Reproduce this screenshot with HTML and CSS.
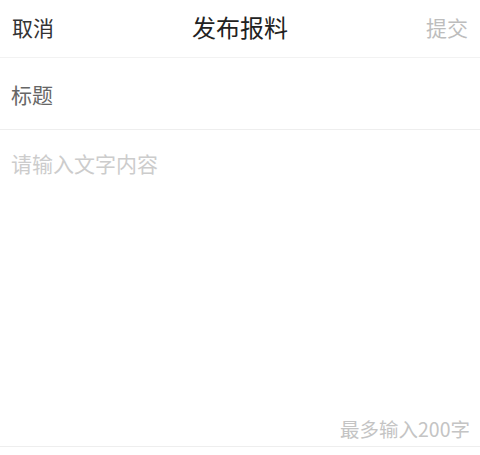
FILE: index.html
```html
<!DOCTYPE html>
<html lang="zh-CN">
<head>
    <meta charset="UTF-8">
    <meta name="viewport" content="width=device-width, initial-scale=1.0">
    <title>发布报料</title>
    <link rel="stylesheet" href="styles.css">
</head>
<body>
    <div class="page">
        <div class="header">
            <span class="cancel">取消</span>
            <span class="title">发布报料</span>
            <span class="submit">提交</span>
        </div>

        <div class="title-row">
            <span class="title-input">标题</span>
        </div>

        <div class="content">
            <div class="placeholder">请输入文字内容</div>
            <div class="counter">最多输入200字</div>
        </div>
    </div>
</body>
</html>
```

FILE: styles.css
```css
body {
    margin: 0;
    background-color: #fff;
    font-family: "Noto Sans CJK SC", "Noto Sans", sans-serif;
}
.page {
    width: 480px;
    height: 455px;
    overflow: hidden;
}
.header {
    height: 58px;
    display: flex;
    align-items: center;
    justify-content: space-between;
    padding: 0 12px 4px 12px;
    box-sizing: border-box;
    border-bottom: 1px solid #f2f2f2;
}
.cancel {
    font-size: 21px;
    color: #333;
    width: 60px;
}
.title {
    font-size: 24px;
    color: #222;
}
.submit {
    font-size: 21px;
    color: #bdbdbd;
    width: 60px;
    text-align: right;
}
.title-row {
    height: 71px;
    display: flex;
    align-items: center;
    padding: 0 11px;
    border-bottom: 1px solid #eeeeee;
}
.title-input {
    font-size: 21px;
    color: #666;
}
.content {
    height: 316px;
    display: flex;
    flex-direction: column;
    justify-content: space-between;
    padding: 0 10px 0 11px;
    border-bottom: 1px solid #eeeeee;
}
.placeholder {
    margin-top: 18px;
    font-size: 21px;
    line-height: 30px;
    color: #cccccc;
}
.counter {
    align-self: flex-end;
    margin-bottom: 4px;
    font-size: 19.5px;
    line-height: 26px;
    color: #c4c4c4;
}
```
